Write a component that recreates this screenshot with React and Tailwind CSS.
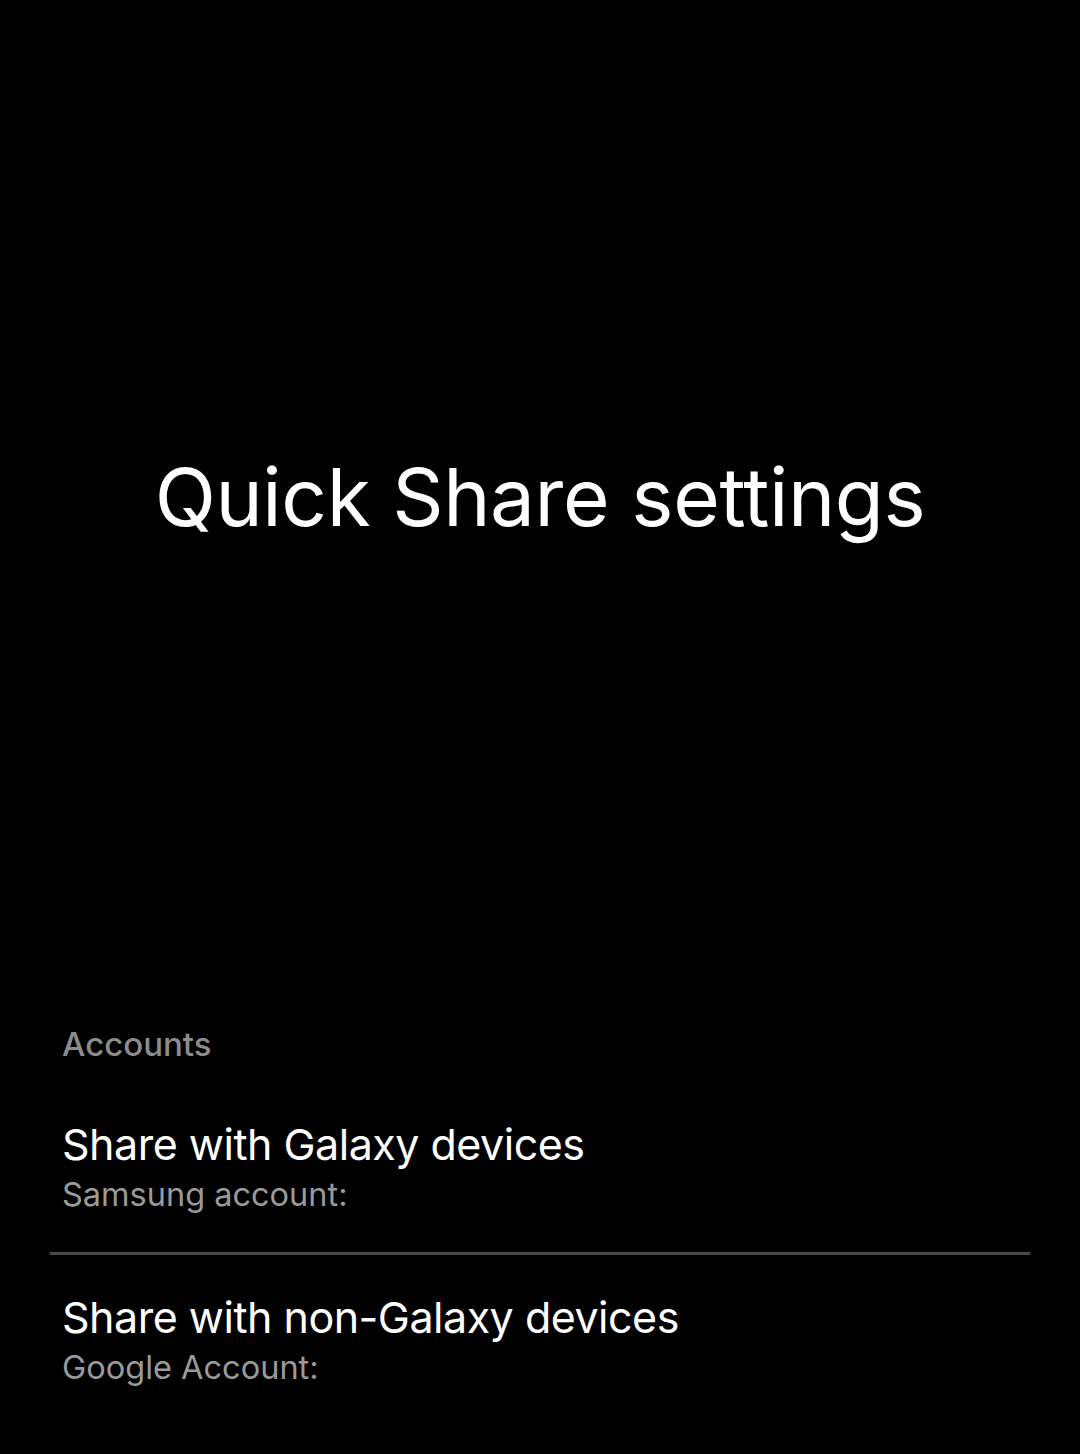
import React from "react";

const font = { fontFamily: "Inter, 'Noto Sans', sans-serif" };

function AccountRow({ title, subtitle, className = "" }) {
  return (
    <div className={`px-[62px] ${className}`}>
      <div className="text-[43px] leading-[52px] text-white tracking-[-0.5px]">{title}</div>
      <div className="text-[32.5px] leading-[40px] text-[#9a9a9a] mt-[5px]">{subtitle}</div>
    </div>
  );
}

export default function App() {
  return (
    <div className="h-[1454px] w-full bg-black flex flex-col" style={font}>
      <header className="h-[994px] flex items-center justify-center">
        <h1 className="text-[80px] text-white tracking-[-0.4px]">Quick Share settings</h1>
      </header>

      <section className="flex flex-col">
        <div className="px-[62px] pt-[28px] pb-[34px] text-[33px] font-medium text-[#8c8c8c] leading-[44px]">
          Accounts
        </div>
        <AccountRow className="pt-[18px] pb-[33px]" title="Share with Galaxy devices" subtitle="Samsung account:" />
        <div className="mx-[50px] h-[3px] bg-[#4a4a4a] mt-[4px]" />
        <AccountRow className="pt-[36px]" title="Share with non-Galaxy devices" subtitle="Google Account:" />
      </section>
    </div>
  );
}
